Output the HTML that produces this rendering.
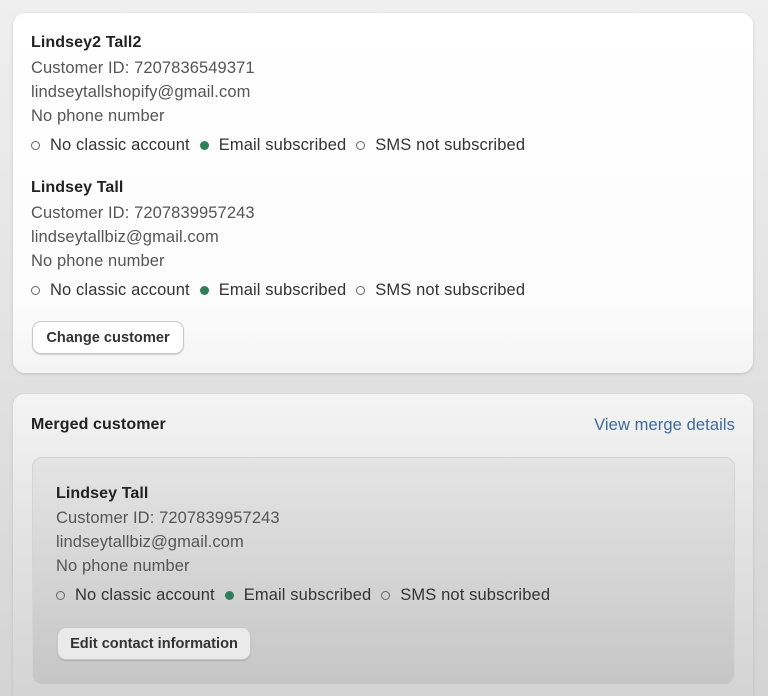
<!DOCTYPE html>
<html style="background:#d4d4d4"><head><style>
*{margin:0;padding:0;box-sizing:border-box}
html,body{width:768px;height:696px;overflow:hidden}
body{background:linear-gradient(#efefef,#e2e2e2 50%,#d4d4d4);font-family:"Liberation Sans",sans-serif;font-size:16.5px;color:#555;position:relative;letter-spacing:.1px}
.card1{position:absolute;left:13px;top:13px;width:740px;height:360px;border-radius:12px;background:linear-gradient(#fff,#fcfcfc 80%,#f4f4f4);box-shadow:0 1px 3px rgba(0,0,0,.15)}
.card2{position:absolute;left:13px;top:394px;width:740px;height:320px;border-radius:12px;background:linear-gradient(#f4f4f4,#e4e4e4 40%,#d2d2d2);box-shadow:0 1px 3px rgba(0,0,0,.12)}
.inner{position:absolute;left:32px;top:457px;width:703px;height:228px;border-radius:10px;background:linear-gradient(#e4e4e4,#d2d2d2 60%,#c6c6c6);border:1px solid #d4d4d4}
.t{position:absolute;line-height:24px;white-space:nowrap;margin-top:1px}
.b{font-weight:bold;color:#222;font-size:16px}
.st{letter-spacing:.12px}
.st span{display:inline-block;vertical-align:middle}
.o{width:9px;height:9px;border:1.3px solid #666;border-radius:50%;margin-right:10px}
.f{width:9px;height:9px;background:#2e7d5b;border-radius:50%;margin-right:10px;margin-left:10px}
.o2{margin-left:10px}
.btn{position:absolute;border:1px solid #c8c8c8;border-radius:9px;background:#fff;box-shadow:0 1px 1px rgba(0,0,0,.15);font-weight:bold;color:#333;font-size:14.6px;text-align:center;line-height:32px;letter-spacing:0}
</style></head><body>
<div class="card1"></div>
<div class="card2"></div>
<div class="inner"></div>

<div class="t b" style="left:31px;top:30px">Lindsey2 Tall2</div>
<div class="t" style="left:31px;top:55px">Customer ID: 7207836549371</div>
<div class="t" style="left:31px;top:79px">lindseytallshopify@gmail.com</div>
<div class="t" style="left:31px;top:103px">No phone number</div>
<div class="t st" style="left:31px;top:132px;color:#333"><span class="o"></span>No classic account<span class="f"></span>Email subscribed<span class="o o2"></span>SMS not subscribed</div>

<div class="t b" style="left:31px;top:175px">Lindsey Tall</div>
<div class="t" style="left:31px;top:200px">Customer ID: 7207839957243</div>
<div class="t" style="left:31px;top:224px">lindseytallbiz@gmail.com</div>
<div class="t" style="left:31px;top:248px">No phone number</div>
<div class="t st" style="left:31px;top:277px;color:#333"><span class="o"></span>No classic account<span class="f"></span>Email subscribed<span class="o o2"></span>SMS not subscribed</div>
<div class="btn" style="left:32px;top:321px;width:152px;height:33px">Change customer</div>

<div class="t b" style="left:31px;top:412px">Merged customer</div>
<div class="t" style="right:33px;top:412px;color:#3f6a9a">View merge details</div>

<div class="t b" style="left:56px;top:481px">Lindsey Tall</div>
<div class="t" style="left:56px;top:505px">Customer ID: 7207839957243</div>
<div class="t" style="left:56px;top:529px">lindseytallbiz@gmail.com</div>
<div class="t" style="left:56px;top:553px">No phone number</div>
<div class="t st" style="left:56px;top:582px;color:#333"><span class="o"></span>No classic account<span class="f"></span>Email subscribed<span class="o o2"></span>SMS not subscribed</div>
<div class="btn" style="left:57px;top:627px;width:194px;height:33px;background:#eaeaea">Edit contact information</div>
</body></html>
